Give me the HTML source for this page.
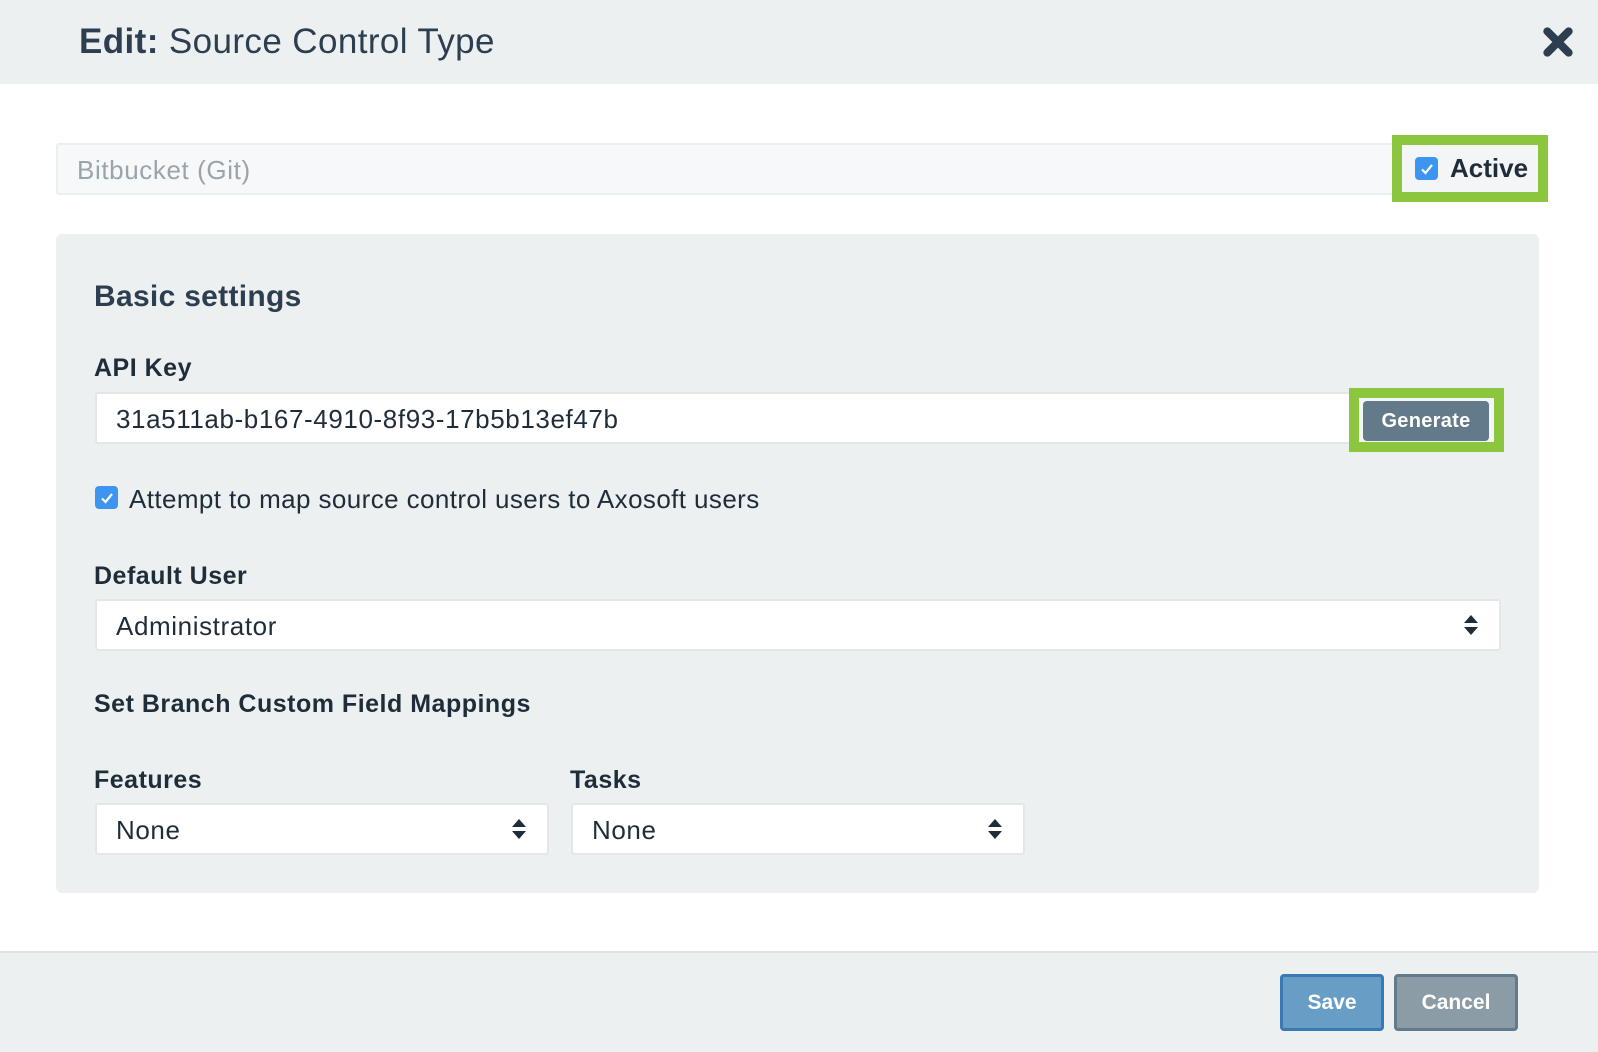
<!DOCTYPE html>
<html><head><style>
*{box-sizing:border-box;margin:0;padding:0}
body{width:1598px;height:1052px;background:#fff;font-family:"Liberation Sans",Arial,sans-serif;color:#1f2d3a;position:relative;overflow:hidden}
.abs{position:absolute}
.hdr{left:0;top:0;width:1598px;height:84px;background:#ecf0f1}
.title{left:79px;top:22px;font-size:35px;letter-spacing:0.4px;color:#2c3e50}
.inp{background:#fff;border:2px solid #e3e7e9;border-radius:3px;font-size:26px;letter-spacing:0.6px;padding-left:19px;padding-top:2px;display:flex;align-items:center;color:#1f2d3a}
.lbl{font-size:25px;letter-spacing:0.5px;font-weight:bold;color:#1f2d3a}
.cb{width:23px;height:23px;background:#3d95f0;border-radius:4px;display:flex;align-items:center;justify-content:center}
.arr{position:absolute;right:20px;top:50%;transform:translateY(-50%)}
</style></head><body>
<div class="abs hdr"></div>
<div class="abs title"><b>Edit:</b> Source Control Type</div>
<svg class="abs" style="left:1542px;top:26px" width="32" height="32" viewBox="0 0 30 30"><path d="M5 5L25 25M25 5L5 25" stroke="#2c3e50" stroke-width="7.5" stroke-linecap="round"/></svg>

<div class="abs inp" style="left:56px;top:143px;width:1340px;height:52px;background:#f6f8f9;color:#9aa4aa;border-color:#eceff0">Bitbucket (Git)</div>
<div class="abs" style="left:1392px;top:135px;width:156px;height:67px;border:10px solid #8cc63f;background:#f4f5f6;display:flex;align-items:center;padding-left:13px">
<div class="cb"><svg width="14" height="12" viewBox="0 0 14 12"><path d="M2 6.5L5.5 10L12 2" stroke="#fff" stroke-width="2.2" fill="none"/></svg></div>
<span style="font-size:26px;font-weight:bold;margin-left:12px;color:#1f2d3a">Active</span></div>

<div class="abs" style="left:56px;top:234px;width:1483px;height:659px;background:#ecf0f1;border-radius:6px"></div>
<div class="abs" style="left:94px;top:280px;font-size:30px;letter-spacing:0.3px;font-weight:bold;color:#2c3e50">Basic settings</div>
<div class="abs lbl" style="left:94px;top:354px">API Key</div>
<div class="abs inp" style="left:95px;top:392px;width:1262px;height:52px">31a511ab-b167-4910-8f93-17b5b13ef47b</div>
<div class="abs" style="left:1349px;top:388px;width:155px;height:64px;border:10px solid #8cc63f;background:#f4f5f6;padding:3px 4px">
<div style="width:126px;height:40px;background:#627a89;border-radius:4px;color:#fff;font-weight:bold;font-size:20px;letter-spacing:0.3px;display:flex;align-items:center;justify-content:center">Generate</div></div>

<div class="abs cb" style="left:95px;top:486px"><svg width="14" height="12" viewBox="0 0 14 12"><path d="M2 6.5L5.5 10L12 2" stroke="#fff" stroke-width="2.2" fill="none"/></svg></div>
<div class="abs" style="left:129px;top:484px;font-size:26px;letter-spacing:0.4px">Attempt to map source control users to Axosoft users</div>

<div class="abs lbl" style="left:94px;top:562px">Default User</div>
<div class="abs inp" style="left:95px;top:599px;width:1406px;height:52px">Administrator
<svg class="arr" width="16" height="22" viewBox="0 0 16 22"><path d="M1 9L8 1L15 9Z M1 13L8 21L15 13Z" fill="#1f2d3a"/></svg></div>

<div class="abs lbl" style="left:94px;top:690px">Set Branch Custom Field Mappings</div>
<div class="abs lbl" style="left:94px;top:766px">Features</div>
<div class="abs lbl" style="left:570px;top:766px">Tasks</div>
<div class="abs inp" style="left:95px;top:803px;width:454px;height:52px">None
<svg class="arr" width="16" height="22" viewBox="0 0 16 22"><path d="M1 9L8 1L15 9Z M1 13L8 21L15 13Z" fill="#1f2d3a"/></svg></div>
<div class="abs inp" style="left:571px;top:803px;width:454px;height:52px">None
<svg class="arr" width="16" height="22" viewBox="0 0 16 22"><path d="M1 9L8 1L15 9Z M1 13L8 21L15 13Z" fill="#1f2d3a"/></svg></div>

<div class="abs" style="left:0;top:951px;width:1598px;height:101px;background:#ecf0f1;border-top:2px solid #dde3e5"></div>
<div class="abs" style="left:1280px;top:974px;width:104px;height:57px;background:#689dc6;border:3px solid #3a7ab4;border-radius:4px;color:#fff;font-weight:bold;font-size:21px;display:flex;align-items:center;justify-content:center">Save</div>
<div class="abs" style="left:1394px;top:974px;width:124px;height:57px;background:#8b9ca6;border:3px solid #627a89;border-radius:4px;color:#fff;font-weight:bold;font-size:21px;display:flex;align-items:center;justify-content:center">Cancel</div>
</body></html>
